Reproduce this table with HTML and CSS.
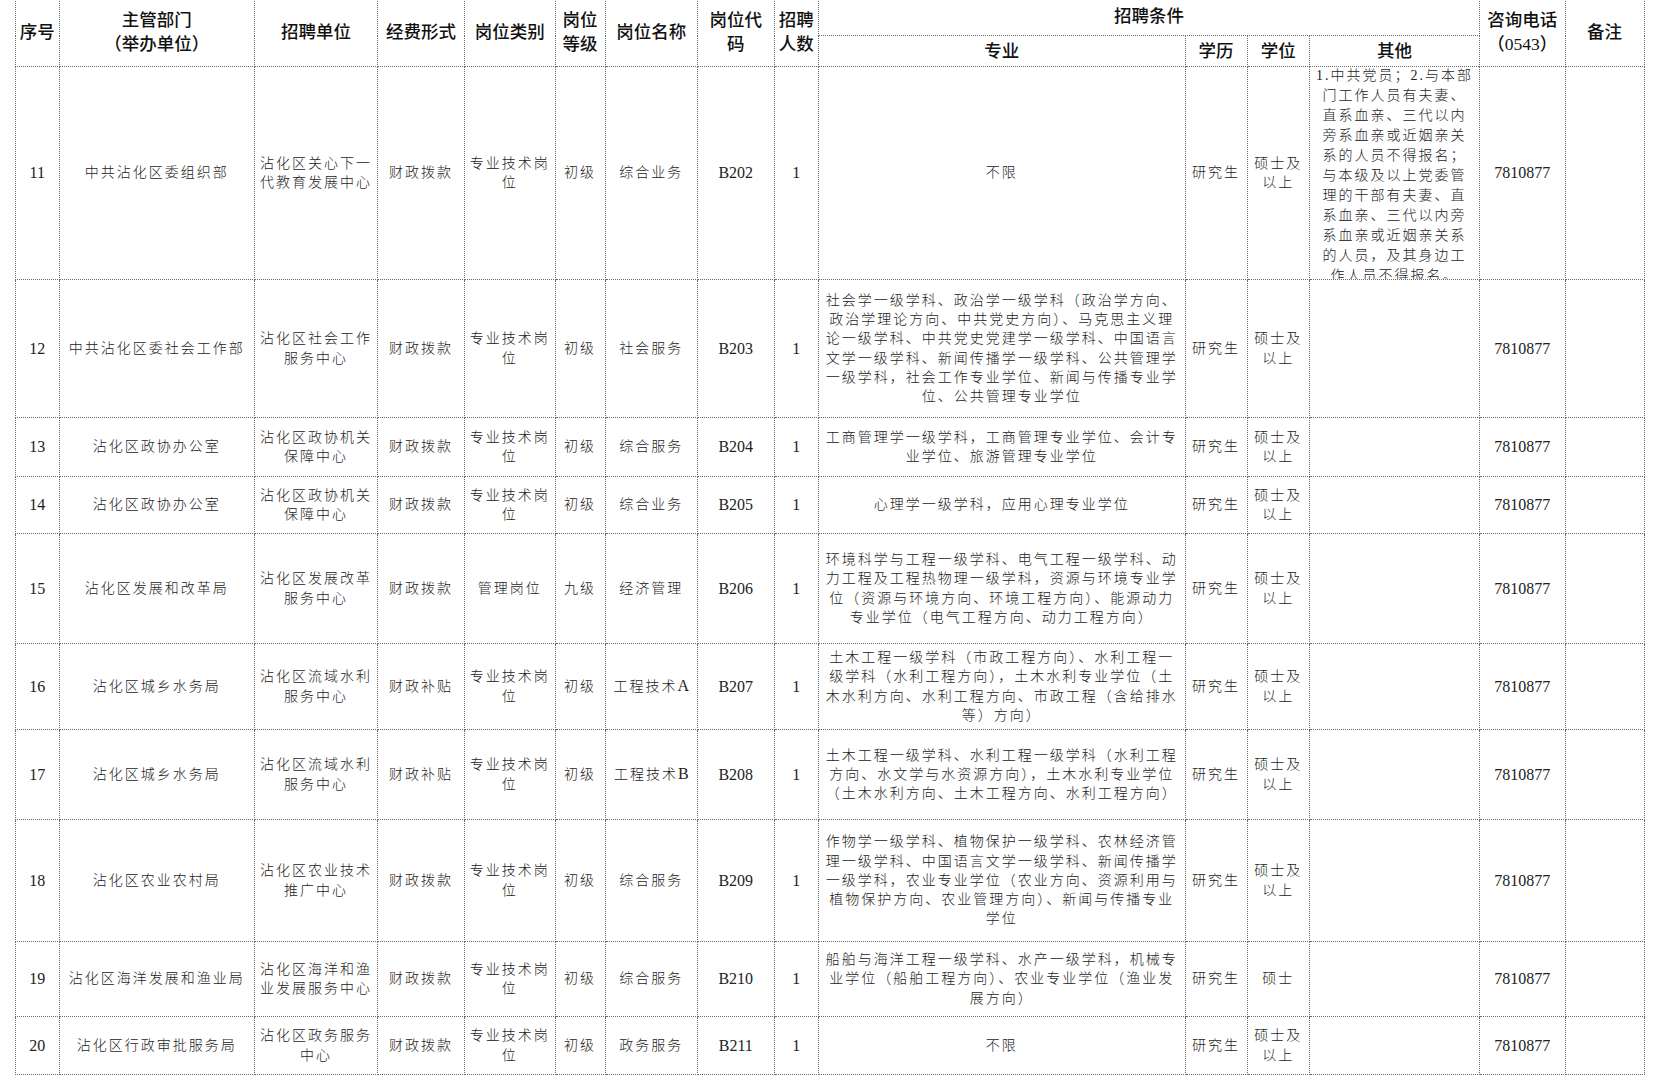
FILE: index.html
```html
<!DOCTYPE html>
<html lang="zh-CN">
<head>
<meta charset="utf-8">
<title>招聘岗位表</title>
<link rel="stylesheet" href="styles.css">
</head>
<body>
<table class="sheet">
  <colgroup>
    <col class="w-no"><col class="w-dept"><col class="w-unit"><col class="w-fund"><col class="w-type">
    <col class="w-grade"><col class="w-name"><col class="w-code"><col class="w-num"><col class="w-major">
    <col class="w-edu"><col class="w-deg"><col class="w-other"><col class="w-tel"><col class="w-note">
  </colgroup>
  <thead>
    <tr class="h1">
      <th rowspan="2">序号</th>
      <th rowspan="2">主管部门<br>（举办单位）</th>
      <th rowspan="2">招聘单位</th>
      <th rowspan="2">经费形式</th>
      <th rowspan="2">岗位类别</th>
      <th rowspan="2">岗位<br>等级</th>
      <th rowspan="2">岗位名称</th>
      <th rowspan="2">岗位代<br>码</th>
      <th rowspan="2">招聘<br>人数</th>
      <th colspan="4">招聘条件</th>
      <th rowspan="2">咨询电话<br>（0543）</th>
      <th rowspan="2">备注</th>
    </tr>
    <tr class="h2">
      <th>专业</th>
      <th>学历</th>
      <th>学位</th>
      <th>其他</th>
    </tr>
  </thead>
  <tbody>
    <tr class="r11">
      <td class="num">11</td>
      <td>中共沾化区委组织部</td>
      <td>沾化区关心下一<br>代教育发展中心</td>
      <td>财政拨款</td>
      <td>专业技术岗<br>位</td>
      <td>初级</td>
      <td>综合业务</td>
      <td class="num">B202</td>
      <td class="num">1</td>
      <td>不限</td>
      <td>研究生</td>
      <td>硕士及<br>以上</td>
      <td><div class="clip"><div class="clip-text">1.中共党员；2.与本部<br>门工作人员有夫妻、<br>直系血亲、三代以内<br>旁系血亲或近姻亲关<br>系的人员不得报名；<br>与本级及以上党委管<br>理的干部有夫妻、直<br>系血亲、三代以内旁<br>系血亲或近姻亲关系<br>的人员，及其身边工<br>作人员不得报名。</div></div></td>
      <td class="num">7810877</td>
      <td></td>
    </tr>
    <tr class="r12">
      <td class="num">12</td>
      <td>中共沾化区委社会工作部</td>
      <td>沾化区社会工作<br>服务中心</td>
      <td>财政拨款</td>
      <td>专业技术岗<br>位</td>
      <td>初级</td>
      <td>社会服务</td>
      <td class="num">B203</td>
      <td class="num">1</td>
      <td class="major">社会学一级学科、政治学一级学科（政治学方向、<br>政治学理论方向、中共党史方向）、马克思主义理<br>论一级学科、中共党史党建学一级学科、中国语言<br>文学一级学科、新闻传播学一级学科、公共管理学<br>一级学科，社会工作专业学位、新闻与传播专业学<br>位、公共管理专业学位</td>
      <td>研究生</td>
      <td>硕士及<br>以上</td>
      <td></td>
      <td class="num">7810877</td>
      <td></td>
    </tr>
    <tr class="r13">
      <td class="num">13</td>
      <td>沾化区政协办公室</td>
      <td>沾化区政协机关<br>保障中心</td>
      <td>财政拨款</td>
      <td>专业技术岗<br>位</td>
      <td>初级</td>
      <td>综合服务</td>
      <td class="num">B204</td>
      <td class="num">1</td>
      <td class="major">工商管理学一级学科，工商管理专业学位、会计专<br>业学位、旅游管理专业学位</td>
      <td>研究生</td>
      <td>硕士及<br>以上</td>
      <td></td>
      <td class="num">7810877</td>
      <td></td>
    </tr>
    <tr class="r14">
      <td class="num">14</td>
      <td>沾化区政协办公室</td>
      <td>沾化区政协机关<br>保障中心</td>
      <td>财政拨款</td>
      <td>专业技术岗<br>位</td>
      <td>初级</td>
      <td>综合业务</td>
      <td class="num">B205</td>
      <td class="num">1</td>
      <td class="major">心理学一级学科，应用心理专业学位</td>
      <td>研究生</td>
      <td>硕士及<br>以上</td>
      <td></td>
      <td class="num">7810877</td>
      <td></td>
    </tr>
    <tr class="r15">
      <td class="num">15</td>
      <td>沾化区发展和改革局</td>
      <td>沾化区发展改革<br>服务中心</td>
      <td>财政拨款</td>
      <td>管理岗位</td>
      <td>九级</td>
      <td>经济管理</td>
      <td class="num">B206</td>
      <td class="num">1</td>
      <td class="major">环境科学与工程一级学科、电气工程一级学科、动<br>力工程及工程热物理一级学科，资源与环境专业学<br>位（资源与环境方向、环境工程方向）、能源动力<br>专业学位（电气工程方向、动力工程方向）</td>
      <td>研究生</td>
      <td>硕士及<br>以上</td>
      <td></td>
      <td class="num">7810877</td>
      <td></td>
    </tr>
    <tr class="r16">
      <td class="num">16</td>
      <td>沾化区城乡水务局</td>
      <td>沾化区流域水利<br>服务中心</td>
      <td>财政补贴</td>
      <td>专业技术岗<br>位</td>
      <td>初级</td>
      <td>工程技术<span class="lat">A</span></td>
      <td class="num">B207</td>
      <td class="num">1</td>
      <td class="major">土木工程一级学科（市政工程方向）、水利工程一<br>级学科（水利工程方向），土木水利专业学位（土<br>木水利方向、水利工程方向、市政工程（含给排水<br>等）方向）</td>
      <td>研究生</td>
      <td>硕士及<br>以上</td>
      <td></td>
      <td class="num">7810877</td>
      <td></td>
    </tr>
    <tr class="r17">
      <td class="num">17</td>
      <td>沾化区城乡水务局</td>
      <td>沾化区流域水利<br>服务中心</td>
      <td>财政补贴</td>
      <td>专业技术岗<br>位</td>
      <td>初级</td>
      <td>工程技术<span class="lat">B</span></td>
      <td class="num">B208</td>
      <td class="num">1</td>
      <td class="major">土木工程一级学科、水利工程一级学科（水利工程<br>方向、水文学与水资源方向），土木水利专业学位<br>（土木水利方向、土木工程方向、水利工程方向）</td>
      <td>研究生</td>
      <td>硕士及<br>以上</td>
      <td></td>
      <td class="num">7810877</td>
      <td></td>
    </tr>
    <tr class="r18">
      <td class="num">18</td>
      <td>沾化区农业农村局</td>
      <td>沾化区农业技术<br>推广中心</td>
      <td>财政拨款</td>
      <td>专业技术岗<br>位</td>
      <td>初级</td>
      <td>综合服务</td>
      <td class="num">B209</td>
      <td class="num">1</td>
      <td class="major">作物学一级学科、植物保护一级学科、农林经济管<br>理一级学科、中国语言文学一级学科、新闻传播学<br>一级学科，农业专业学位（农业方向、资源利用与<br>植物保护方向、农业管理方向）、新闻与传播专业<br>学位</td>
      <td>研究生</td>
      <td>硕士及<br>以上</td>
      <td></td>
      <td class="num">7810877</td>
      <td></td>
    </tr>
    <tr class="r19">
      <td class="num">19</td>
      <td>沾化区海洋发展和渔业局</td>
      <td>沾化区海洋和渔<br>业发展服务中心</td>
      <td>财政拨款</td>
      <td>专业技术岗<br>位</td>
      <td>初级</td>
      <td>综合服务</td>
      <td class="num">B210</td>
      <td class="num">1</td>
      <td class="major">船舶与海洋工程一级学科、水产一级学科，机械专<br>业学位（船舶工程方向）、农业专业学位（渔业发<br>展方向）</td>
      <td>研究生</td>
      <td>硕士</td>
      <td></td>
      <td class="num">7810877</td>
      <td></td>
    </tr>
    <tr class="r20">
      <td class="num">20</td>
      <td>沾化区行政审批服务局</td>
      <td>沾化区政务服务<br>中心</td>
      <td>财政拨款</td>
      <td>专业技术岗<br>位</td>
      <td>初级</td>
      <td>政务服务</td>
      <td class="num">B211</td>
      <td class="num">1</td>
      <td>不限</td>
      <td>研究生</td>
      <td>硕士及<br>以上</td>
      <td></td>
      <td class="num">7810877</td>
      <td></td>
    </tr>
  </tbody>
</table>
</body>
</html>
```

FILE: styles.css
```css
html, body {
  margin: 0;
  padding: 0;
  background: #ffffff;
}

body {
  overflow: hidden;
}

.sheet {
  margin: -4px 0 0 15px;
  border-collapse: collapse;
  table-layout: fixed;
  color: #222222;
}

.w-no { width: 43.5px; }
.w-dept { width: 195.5px; }
.w-unit { width: 123px; }
.w-fund { width: 87px; }
.w-type { width: 90.5px; }
.w-grade { width: 50px; }
.w-name { width: 92.5px; }
.w-code { width: 76.5px; }
.w-num { width: 44.5px; }
.w-major { width: 366.5px; }
.w-edu { width: 62px; }
.w-deg { width: 62.5px; }
.w-other { width: 170px; }
.w-tel { width: 85.5px; }
.w-note { width: 79px; }

.sheet th,
.sheet td {
  border: 1px dotted #6b6b6b;
  padding: 0;
  text-align: center;
  vertical-align: middle;
  overflow: hidden;
}

.sheet th {
  font-family: "Liberation Serif", "Noto Sans CJK SC", sans-serif;
  font-weight: 500;
  font-size: 17.5px;
  line-height: 24px;
  color: #111111;
}

.sheet td {
  font-family: "Liberation Serif", "Noto Sans CJK SC", serif;
  font-weight: 300;
  font-size: 14px;
  letter-spacing: 2px;
  line-height: 19.5px;
  white-space: nowrap;
}

.sheet td.num {
  font-size: 16px;
  letter-spacing: 0;
  font-weight: 400;
}

.lat {
  font-size: 16px;
  letter-spacing: 0;
  font-weight: 400;
}

.sheet td.major {
  line-height: 19.3px;
}

.clip {
  height: 212px;
  overflow: hidden;
  line-height: 20px;
}

.clip-text {
  margin-top: -1px;
}

.h1 { height: 39px; }
.h2 { height: 31px; }
.r11 { height: 213px; }
.r12 { height: 138px; }
.r13 { height: 59px; }
.r14 { height: 57px; }
.r15 { height: 110px; }
.r16 { height: 86px; }
.r17 { height: 90px; }
.r18 { height: 122px; }
.r19 { height: 75px; }
.r20 { height: 58px; }
```
